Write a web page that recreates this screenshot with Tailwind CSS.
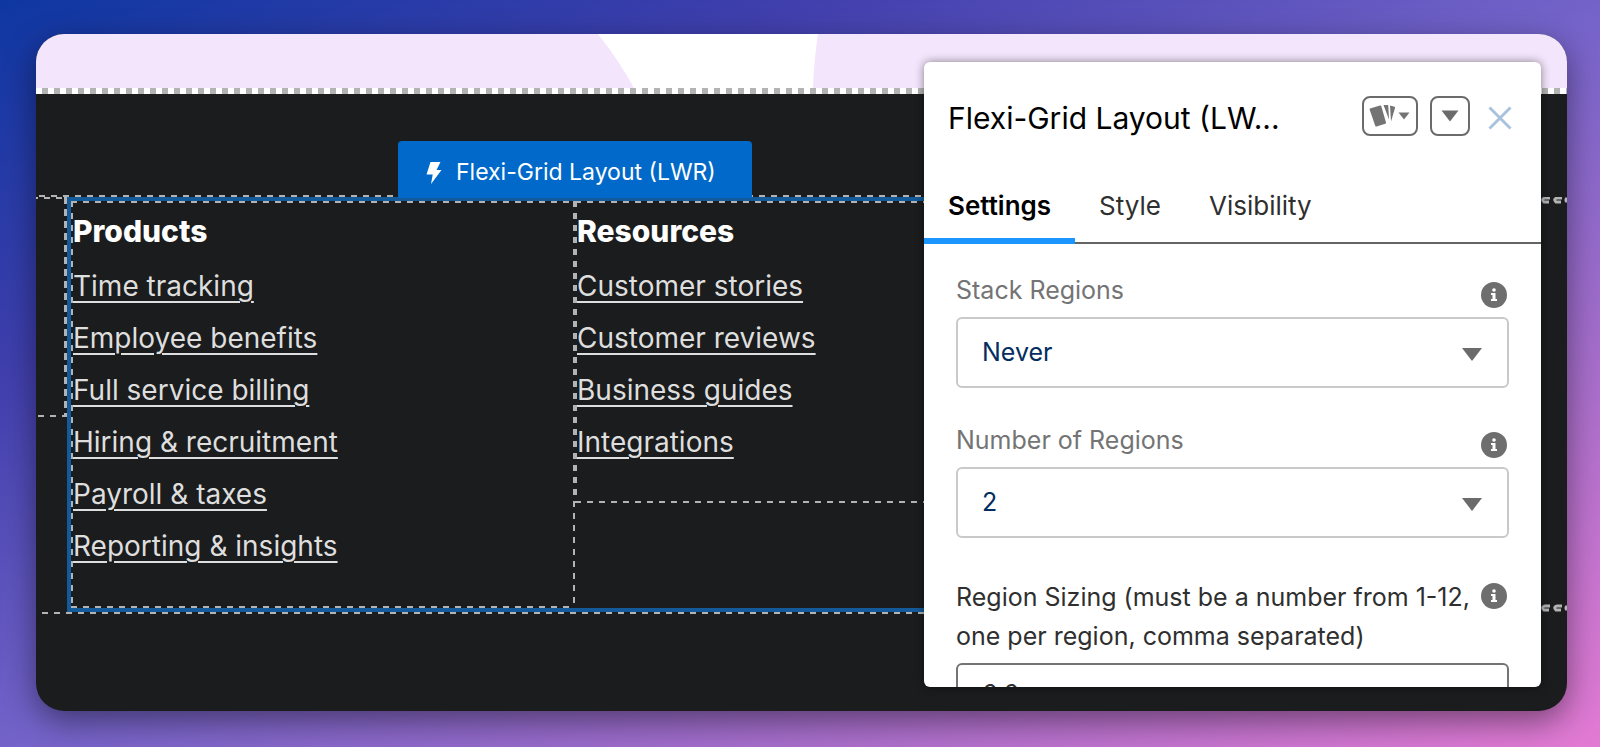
<!DOCTYPE html>
<html lang="en">
<head>
  <meta charset="UTF-8" />
  <meta name="viewport" content="width=device-width, initial-scale=1.0"/>
  <title>Flexi-Grid Layout (LWR)</title>
  <script src="https://cdn.jsdelivr.net/npm/@tailwindcss/browser@4"></script>
</head>
<body class="flex min-h-screen pt-[34px] pr-[33px] pb-9 pl-9 font-['Inter',sans-serif] bg-[linear-gradient(to_bottom_right,#0e37a2_0%,#403fad_25%,#7363c9_50%,#a86ecb_75%,#e37ad3_100%)]">

  <div class="relative flex flex-1 flex-col overflow-hidden rounded-[28px] bg-[#1b1c1d] shadow-[0_10px_32px_rgba(0,0,0,0.45)]">

    <!-- Hero banner -->
    <div class="flex h-[54px] bg-[#f3e5fc]">
      <svg class="ml-[562px] h-full w-[222px]" viewBox="0 0 222 54" aria-hidden="true">
        <path d="M0 0H220Q216 26 215 54H36Q22 28 0 0Z" fill="#fff"/>
      </svg>
    </div>
    <div class="h-[6px] bg-[repeating-linear-gradient(90deg,#fff_0_6px,#b3b3b3_6px_12px)]"></div>

    <!-- Canvas -->
    <main class="relative mt-[101px]">
      <div class="mr-[31px] h-[2px] bg-[repeating-linear-gradient(90deg,transparent_0_3px,#b3b3b3_3px_9px,transparent_9px_12px)]"></div>
      <div class="flex">
        <div class="h-[220px] w-[31px] [background:repeating-linear-gradient(90deg,#b3b3b3_0_2px,transparent_2px_8px,#b3b3b3_8px_12px)_0_0/100%_2px_no-repeat,repeating-linear-gradient(90deg,transparent_0_2px,#b3b3b3_2px_8px,transparent_8px_12px)_0_100%/100%_2px_no-repeat,repeating-linear-gradient(180deg,#b3b3b3_0_7px,transparent_7px_12px)_100%_0/3px_100%_no-repeat]"></div>

        <section class="relative flex flex-1 items-start border-4 border-[#125a99]">
          <div class="absolute -top-[60px] left-[327px] flex h-[57px] w-[354px] items-center gap-[14px] rounded-t-[4px] bg-[#0169c9] pt-[6px] pl-7 text-[23px] text-white">
            <svg class="h-[22px] w-4" viewBox="0 0 16 22" fill="#fff" aria-hidden="true">
              <path d="M4.500 0H14.500L10.500 8H15.500L5 22L6.700 12.500H0.500Z"/>
            </svg>
            <span>Flexi-Grid Layout (LWR)</span>
          </div>

          <div class="h-[407px] w-[504px] pt-1 pl-[2px] [background:repeating-linear-gradient(90deg,#b3b3b3_0_6px,transparent_6px_12px)_0_0/100%_2px_no-repeat,repeating-linear-gradient(90deg,#b3b3b3_0_6px,transparent_6px_12px)_0_100%/100%_2px_no-repeat,repeating-linear-gradient(180deg,#b3b3b3_0_6px,transparent_6px_12px)_0_0/2px_100%_no-repeat,repeating-linear-gradient(180deg,#b3b3b3_0_6px,transparent_6px_12px)_100%_0/2px_100%_no-repeat]">
            <h2 class="text-[30px] leading-[52px] font-extrabold text-white">Products</h2>
            <ul class="mt-[3px] text-[28px] leading-[52px] text-[#dedede]">
              <li><a href="#" class="underline decoration-2 underline-offset-[5px]">Time tracking</a></li>
              <li><a href="#" class="underline decoration-2 underline-offset-[5px]">Employee benefits</a></li>
              <li><a href="#" class="underline decoration-2 underline-offset-[5px]">Full service billing</a></li>
              <li><a href="#" class="underline decoration-2 underline-offset-[5px]">Hiring &amp; recruitment</a></li>
              <li><a href="#" class="underline decoration-2 underline-offset-[5px]">Payroll &amp; taxes</a></li>
              <li><a href="#" class="underline decoration-2 underline-offset-[5px]">Reporting &amp; insights</a></li>
            </ul>
          </div>

          <div class="h-[302px] flex-1 pt-1 pl-[2px] [background:repeating-linear-gradient(90deg,#b3b3b3_0_6px,transparent_6px_12px)_0_0/100%_2px_no-repeat,repeating-linear-gradient(90deg,#b3b3b3_0_6px,transparent_6px_12px)_0_100%/100%_2px_no-repeat,repeating-linear-gradient(180deg,#b3b3b3_0_6px,transparent_6px_12px)_0_0/2px_100%_no-repeat]">
            <h2 class="text-[30px] leading-[52px] font-extrabold text-white">Resources</h2>
            <ul class="mt-[3px] text-[28px] leading-[52px] text-[#dedede]">
              <li><a href="#" class="underline decoration-2 underline-offset-[5px]">Customer stories</a></li>
              <li><a href="#" class="underline decoration-2 underline-offset-[5px]">Customer reviews</a></li>
              <li><a href="#" class="underline decoration-2 underline-offset-[5px]">Business guides</a></li>
              <li><a href="#" class="underline decoration-2 underline-offset-[5px]">Integrations</a></li>
            </ul>
          </div>
        </section>

        <!-- Edge of the next column -->
        <svg class="h-[415px] w-[31px]" viewBox="0 0 31 415" fill="none" stroke="#b3b3b3" stroke-width="3" aria-hidden="true">
          <path d="M14 1H9Q5 2 8 5H13M26 1H21Q17 2 20 5H25M31 1Q29 3 31 5"/>
          <path d="M14 409H9Q5 410 8 413H13M26 409H21Q17 410 20 413H25M31 409Q29 411 31 413"/>
        </svg>
      </div>
      <div class="mr-[31px] h-[2px] bg-[repeating-linear-gradient(90deg,transparent_0_6px,#b3b3b3_6px_12px)]"></div>
    </main>

    <!-- Property panel -->
    <aside class="absolute top-[28px] right-[26px] bottom-6 flex w-[617px] flex-col overflow-hidden rounded-[6px] bg-white text-[26px] shadow-[0_0_10px_rgba(0,0,0,0.45)]">
      <header class="flex h-[74px] items-start pt-[34px] pr-[29px] pl-6">
        <h1 class="flex-1 text-[30px] leading-[44px] text-black">Flexi-Grid Layout (LW...</h1>
        <button type="button" aria-label="Style sets" class="mr-3 flex h-10 w-14 items-center justify-center rounded-[8px] border-2 border-[#6b6b6b]">
          <svg class="h-6 w-[42px]" viewBox="0 0 42 24" fill="#747474" aria-hidden="true">
            <path d="M1 4.500L11 1.500Q12 1.200 12.300 2.200L17 18.500Q17.200 19.500 16.300 19.800L7.500 22.500Q6.500 22.800 6.200 21.800L0.700 5.700Q0.500 4.800 1 4.500Z"/>
            <path d="M14.500 1H18.500Q19.300 1 19.300 2L20 15.500Z"/>
            <path d="M21 1.500L25.500 2.800Q26.300 3.100 26 4L22 17.500Z"/>
            <path d="M29.500 8.500H40.500L35 15.500Z"/>
          </svg>
        </button>
        <button type="button" aria-label="More actions" class="mr-[18px] flex h-10 w-10 items-center justify-center rounded-[8px] border-2 border-[#6b6b6b]">
          <svg class="h-3 w-[18px]" viewBox="0 0 18 12" fill="#6b6b6b" aria-hidden="true"><path d="M0.500 0.500H17.500L9 11.500Z"/></svg>
        </button>
        <button type="button" aria-label="Close" class="flex h-11 items-center">
          <svg class="h-6 w-6" viewBox="0 0 24 24" fill="none" stroke="#a9c3de" stroke-width="3" aria-hidden="true"><path d="M1.500 1.500L22.500 22.500M22.500 1.500L1.500 22.500"/></svg>
        </button>
      </header>

      <nav class="mt-[33px] flex border-b-2 border-[#646464] leading-[38px] text-[#2f2f2f]">
        <a href="#" class="-mb-[2px] border-b-[6px] border-[#1b96ff] px-6 pt-[18px] pb-[13px] font-semibold text-black">Settings</a>
        <a href="#" class="px-6 pt-[18px]">Style</a>
        <a href="#" class="px-6 pt-[18px]">Visibility</a>
      </nav>

      <form class="px-8 pt-[27px] text-[25px] [font-optical-sizing:none]">
        <div class="relative mb-[33px]">
          <label for="stack" class="block leading-[39px] text-[#747474]">Stack Regions</label>
          <svg class="absolute top-[11px] right-[2px] h-[26px] w-[26px]" viewBox="0 0 26 26" aria-hidden="true">
            <circle cx="13" cy="13" r="13" fill="#6e6e6e"/><circle cx="13" cy="8" r="1.800" fill="#fff"/><path d="M10 11H14.500V17H16V19H10V17H11.500V13H10Z" fill="#fff"/>
          </svg>
          <div class="relative mt-[7px]">
            <select id="stack" class="block h-[71px] w-full appearance-none rounded-[6px] border-2 border-[#c9c9c9] bg-white px-6 text-[#032d60]">
              <option>Never</option>
            </select>
            <svg class="pointer-events-none absolute top-[31px] right-[27px] h-[13px] w-5" viewBox="0 0 20 13" fill="#6b6b6b" aria-hidden="true"><path d="M0 0H20L10 13Z"/></svg>
          </div>
        </div>

        <div class="relative mb-10">
          <label for="count" class="block leading-[39px] text-[#747474]">Number of Regions</label>
          <svg class="absolute top-[11px] right-[2px] h-[26px] w-[26px]" viewBox="0 0 26 26" aria-hidden="true">
            <circle cx="13" cy="13" r="13" fill="#6e6e6e"/><circle cx="13" cy="8" r="1.800" fill="#fff"/><path d="M10 11H14.500V17H16V19H10V17H11.500V13H10Z" fill="#fff"/>
          </svg>
          <div class="relative mt-[7px]">
            <select id="count" class="block h-[71px] w-full appearance-none rounded-[6px] border-2 border-[#c9c9c9] bg-white px-6 text-[#032d60]">
              <option>2</option>
            </select>
            <svg class="pointer-events-none absolute top-[31px] right-[27px] h-[13px] w-5" viewBox="0 0 20 13" fill="#6b6b6b" aria-hidden="true"><path d="M0 0H20L10 13Z"/></svg>
          </div>
        </div>

        <div class="relative">
          <label for="sizing" class="block leading-[39px] text-[#2f2f2f]">Region Sizing (must be a number from 1-12,<br/>one per region, comma separated)</label>
          <svg class="absolute top-[5px] right-[2px] h-[26px] w-[26px]" viewBox="0 0 26 26" aria-hidden="true">
            <circle cx="13" cy="13" r="13" fill="#6e6e6e"/><circle cx="13" cy="8" r="1.800" fill="#fff"/><path d="M10 11H14.500V17H16V19H10V17H11.500V13H10Z" fill="#fff"/>
          </svg>
          <input id="sizing" type="text" value="6,6" class="mt-[7px] h-[62px] w-full rounded-[6px] border-2 border-[#747474] px-6 text-[#2f2f2f]"/>
        </div>
      </form>
    </aside>
  </div>

</body>
</html>
